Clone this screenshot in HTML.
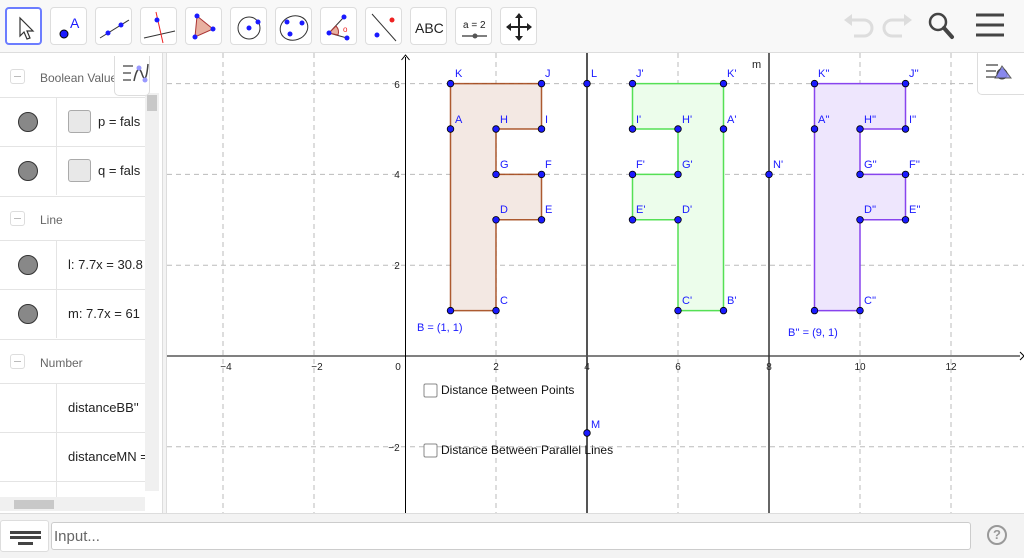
<!DOCTYPE html>
<html><head><meta charset="utf-8">
<style>
*{margin:0;padding:0;box-sizing:border-box}
body{width:1024px;height:558px;overflow:hidden;background:#fff;font-family:"Liberation Sans",sans-serif;position:relative}
.tb{position:absolute;left:0;top:0;width:1024px;height:53px;background:#f8f8f8;border-bottom:1px solid #ddd}
.btn{position:absolute;top:7px;width:37px;height:38px;background:#fff;border:1px solid #ddd;border-radius:4px}
.btn svg{position:absolute;left:0;top:0}
.lp{position:absolute;left:0;top:53px;width:163px;height:460px;background:#fff;border-right:1px solid #ddd}
.hdr{position:absolute;left:0;width:145px;height:44px;font-size:12px;color:#666}
.hdr .m{position:absolute;left:10px;top:14px;width:15px;height:15px;border:1px solid #ddd;border-radius:3px}
.hdr .m:after{content:"";position:absolute;left:3px;top:6px;width:7px;height:1px;background:#bbb}
.hdr span{position:absolute;left:40px;top:16px}
.row{position:absolute;left:0;width:145px;height:49px;border-top:1px solid #e4e4e4;font-size:13px;color:#222}
.row .c{position:absolute;left:18px;top:14px;width:20px;height:20px;border-radius:50%;background:#888;border:1px solid #333}
.row .d{position:absolute;left:56px;top:0;width:1px;height:48px;background:#e4e4e4}
.row .t{position:absolute;left:68px;top:16px;white-space:nowrap}
.row .bx{position:absolute;left:68px;top:12px;width:23px;height:23px;border:1px solid #aaa;border-radius:3px;background:#e8e8e8}
.bb{position:absolute;left:0;top:513px;width:1024px;height:45px;background:#f3f3f3;border-top:1px solid #ddd}
</style></head><body>
<div class="tb">
 <div class="btn" style="left:5px;border:2px solid #6c7dff"><svg width="37" height="38"><path d="M13 9 L13 27 L17 23 L20 30 L23 29 L20 22 L26 22 Z" fill="#fff" stroke="#333" stroke-width="1.2"/></svg></div>
 <div class="btn" style="left:50px"><svg width="37" height="38"><circle cx="13" cy="26" r="4" fill="#1a1aff" stroke="#000"/><text x="19" y="20" font-size="14" fill="#1a1aff" font-family="Liberation Sans">A</text></svg></div>
 <div class="btn" style="left:95px"><svg width="37" height="38"><line x1="4" y1="30" x2="33" y2="12" stroke="#333"/><circle cx="12" cy="25" r="2.5" fill="#1a1aff"/><circle cx="25" cy="17" r="2.5" fill="#1a1aff"/></svg></div>
 <div class="btn" style="left:140px"><svg width="37" height="38"><line x1="3" y1="30" x2="34" y2="23" stroke="#333"/><line x1="15" y1="4" x2="22" y2="35" stroke="#e22"/><circle cx="16" cy="12" r="2.5" fill="#1a1aff"/></svg></div>
 <div class="btn" style="left:185px"><svg width="37" height="38"><polygon points="11,8 27,21 9,29" fill="#e8b0a0" stroke="#a33"/><circle cx="11" cy="8" r="2.5" fill="#1a1aff"/><circle cx="27" cy="21" r="2.5" fill="#1a1aff"/><circle cx="9" cy="29" r="2.5" fill="#1a1aff"/></svg></div>
 <div class="btn" style="left:230px"><svg width="37" height="38"><circle cx="18" cy="20" r="11" fill="none" stroke="#333"/><circle cx="18" cy="20" r="2.5" fill="#1a1aff"/><circle cx="27" cy="14" r="2.5" fill="#1a1aff"/></svg></div>
 <div class="btn" style="left:275px"><svg width="37" height="38"><ellipse cx="18" cy="20" rx="14" ry="12" fill="none" stroke="#333" transform="rotate(-20 18 20)"/><circle cx="11" cy="14" r="2.5" fill="#1a1aff"/><circle cx="26" cy="15" r="2.5" fill="#1a1aff"/><circle cx="14" cy="26" r="2.5" fill="#1a1aff"/></svg></div>
 <div class="btn" style="left:320px"><svg width="37" height="38"><path d="M8 25 L23 9 M8 25 L26 30" stroke="#333" fill="none"/><path d="M8 25 L15 18 A9 9 0 0 1 17 27 Z" fill="#e8b0a0" stroke="#a33"/><text x="22" y="24" font-size="8" fill="#e22">o</text><circle cx="8" cy="25" r="2.5" fill="#1a1aff"/><circle cx="23" cy="9" r="2.5" fill="#1a1aff"/><circle cx="26" cy="30" r="2.5" fill="#1a1aff"/></svg></div>
 <div class="btn" style="left:365px"><svg width="37" height="38"><line x1="6" y1="6" x2="30" y2="33" stroke="#333"/><circle cx="26" cy="12" r="2.5" fill="#e22"/><circle cx="11" cy="27" r="2.5" fill="#1a1aff"/></svg></div>
 <div class="btn" style="left:410px"><svg width="37" height="38"><text x="4" y="25" font-size="14" fill="#222" font-family="Liberation Sans">ABC</text></svg></div>
 <div class="btn" style="left:455px"><svg width="37" height="38"><text x="7" y="20" font-size="10" fill="#222" font-family="Liberation Sans">a = 2</text><line x1="6" y1="28" x2="31" y2="28" stroke="#555" stroke-width="1.5"/><circle cx="19" cy="28" r="2.5" fill="#555"/></svg></div>
 <div class="btn" style="left:500px"><svg width="37" height="38"><path d="M18 6 V32 M6 19 H30" stroke="#222" stroke-width="2"/><path d="M18 5 l-4 5 h8z M18 33 l-4 -5 h8z M5 19 l5 -4 v8z M31 19 l-5 -4 v8z" fill="#222"/></svg></div>
 <svg style="position:absolute;left:840px;top:10px" width="180" height="36">
  <path d="M10 10 H24 A8 8 0 0 1 24 26 H14" fill="none" stroke="#ddd" stroke-width="3"/><path d="M4 10 l8 -6 v12z" fill="#ddd"/>
  <path d="M66 10 H52 A8 8 0 0 0 52 26 H62" fill="none" stroke="#ddd" stroke-width="3"/><path d="M72 10 l-8 -6 v12z" fill="#ddd"/>
  <circle cx="98" cy="12" r="8" fill="none" stroke="#444" stroke-width="2.5"/><line x1="104" y1="18" x2="112" y2="27" stroke="#444" stroke-width="4" stroke-linecap="round"/>
  <path d="M136 5 H164 M136 15 H164 M136 25 H164" stroke="#444" stroke-width="3"/>
 </svg>
</div>

<svg style="position:absolute;left:0;top:0" width="1024" height="558">
 <g stroke="#bbb" stroke-dasharray="5,4" stroke-width="1">
  <line x1="223" y1="53" x2="223" y2="513"/><line x1="314" y1="53" x2="314" y2="513"/><line x1="496" y1="53" x2="496" y2="513"/><line x1="678" y1="53" x2="678" y2="513"/><line x1="860" y1="53" x2="860" y2="513"/><line x1="951" y1="53" x2="951" y2="513"/>
  <line x1="167" y1="83.6" x2="1024" y2="83.6"/><line x1="167" y1="174.4" x2="1024" y2="174.4"/><line x1="167" y1="265.2" x2="1024" y2="265.2"/><line x1="167" y1="446.8" x2="1024" y2="446.8"/>
 </g>
 <line x1="167" y1="356" x2="1020" y2="356" stroke="#000"/><path d="M1020 352 L1024 356 L1020 360" fill="none" stroke="#000"/>
 <line x1="405.5" y1="57" x2="405.5" y2="513" stroke="#000"/><path d="M401.5 60 L405.5 55 L409.5 60" fill="none" stroke="#000"/>
 <line x1="587" y1="53" x2="587" y2="513" stroke="#555" stroke-width="2"/>
 <line x1="769" y1="53" x2="769" y2="513" stroke="#333" stroke-width="1.5"/>
 <g font-size="10" fill="#222" font-family="Liberation Sans" text-anchor="middle">
  <text x="226" y="370">−4</text><text x="317" y="370">−2</text><text x="398" y="370">0</text><text x="496" y="370">2</text><text x="587" y="370">4</text><text x="678" y="370">6</text><text x="769" y="370">8</text><text x="860" y="370">10</text><text x="951" y="370">12</text>
  <text x="397" y="88">6</text><text x="397" y="178">4</text><text x="397" y="269">2</text><text x="394" y="451">−2</text>
 </g>
 <polygon points="450.5,310.6 450.5,83.6 541.5,83.6 541.5,129 496,129 496,174.4 541.5,174.4 541.5,219.8 496,219.8 496,310.6" fill="#f3e8e3" stroke="#993300" stroke-width="1.5" stroke-opacity="0.8"/>
 <polygon points="723.5,310.6 723.5,83.6 632.5,83.6 632.5,129 678,129 678,174.4 632.5,174.4 632.5,219.8 678,219.8 678,310.6" fill="#ecfdeb" stroke="#55e055" stroke-width="1.5"/>
 <polygon points="814.5,310.6 814.5,83.6 905.5,83.6 905.5,129 860,129 860,174.4 905.5,174.4 905.5,219.8 860,219.8 860,310.6" fill="#eee6fd" stroke="#8844ee" stroke-width="1.5"/>
 <g fill="#1a1aff" stroke="#000" stroke-width="0.8">
  <circle cx="450.5" cy="310.6" r="3.3"/><circle cx="450.5" cy="83.6" r="3.3"/><circle cx="541.5" cy="83.6" r="3.3"/><circle cx="450.5" cy="129" r="3.3"/><circle cx="541.5" cy="129" r="3.3"/><circle cx="496" cy="129" r="3.3"/><circle cx="496" cy="174.4" r="3.3"/><circle cx="541.5" cy="174.4" r="3.3"/><circle cx="541.5" cy="219.8" r="3.3"/><circle cx="496" cy="219.8" r="3.3"/><circle cx="496" cy="310.6" r="3.3"/>
  <circle cx="723.5" cy="310.6" r="3.3"/><circle cx="723.5" cy="83.6" r="3.3"/><circle cx="632.5" cy="83.6" r="3.3"/><circle cx="723.5" cy="129" r="3.3"/><circle cx="632.5" cy="129" r="3.3"/><circle cx="678" cy="129" r="3.3"/><circle cx="678" cy="174.4" r="3.3"/><circle cx="632.5" cy="174.4" r="3.3"/><circle cx="632.5" cy="219.8" r="3.3"/><circle cx="678" cy="219.8" r="3.3"/><circle cx="678" cy="310.6" r="3.3"/>
  <circle cx="814.5" cy="310.6" r="3.3"/><circle cx="814.5" cy="83.6" r="3.3"/><circle cx="905.5" cy="83.6" r="3.3"/><circle cx="814.5" cy="129" r="3.3"/><circle cx="905.5" cy="129" r="3.3"/><circle cx="860" cy="129" r="3.3"/><circle cx="860" cy="174.4" r="3.3"/><circle cx="905.5" cy="174.4" r="3.3"/><circle cx="905.5" cy="219.8" r="3.3"/><circle cx="860" cy="219.8" r="3.3"/><circle cx="860" cy="310.6" r="3.3"/>
  <circle cx="587" cy="83.6" r="3.3"/><circle cx="769" cy="174.4" r="3.3"/><circle cx="587" cy="433" r="3.3"/>
 </g>
 <g font-size="11" fill="#1a1aff" font-family="Liberation Sans">
  <text x="455" y="77">K</text><text x="545" y="77">J</text><text x="455" y="123">A</text><text x="500" y="123">H</text><text x="545" y="123">I</text><text x="500" y="168">G</text><text x="545" y="168">F</text><text x="500" y="213">D</text><text x="545" y="213">E</text><text x="500" y="304">C</text><text x="417" y="331">B = (1, 1)</text>
  <text x="636" y="77">J'</text><text x="727" y="77">K'</text><text x="636" y="123">I'</text><text x="682" y="123">H'</text><text x="727" y="123">A'</text><text x="636" y="168">F'</text><text x="682" y="168">G'</text><text x="636" y="213">E'</text><text x="682" y="213">D'</text><text x="682" y="304">C'</text><text x="727" y="304">B'</text>
  <text x="818" y="77">K''</text><text x="909" y="77">J''</text><text x="818" y="123">A''</text><text x="864" y="123">H''</text><text x="909" y="123">I''</text><text x="864" y="168">G''</text><text x="909" y="168">F''</text><text x="864" y="213">D''</text><text x="909" y="213">E''</text><text x="864" y="304">C''</text><text x="788" y="336">B'' = (9, 1)</text>
  <text x="591" y="77">L</text><text x="773" y="168">N'</text><text x="591" y="428">M</text>
 </g>
 <text x="752" y="68" font-size="11" fill="#222" font-family="Liberation Sans">m</text>
 <g font-size="12" fill="#111" font-family="Liberation Sans">
  <rect x="424" y="384" width="13" height="13" rx="1.5" fill="#fff" stroke="#888"/><text x="441" y="394">Distance Between Points</text>
  <rect x="424" y="444" width="13" height="13" rx="1.5" fill="#fff" stroke="#888"/><text x="441" y="454">Distance Between Parallel Lines</text>
 </g>
</svg>

<div style="position:absolute;left:977px;top:53px;width:47px;height:42px;background:#fff;border:1px solid #ddd;border-top:none;border-right:none;border-radius:0 0 0 5px">
 <svg width="47" height="42"><path d="M8 12 H20 M8 18 H18 M8 24 H18" stroke="#888" stroke-width="2"/><circle cx="24" cy="21" r="5" fill="#8888ee" stroke="#444"/><polygon points="24,13 33,25 17,25" fill="#8888ee" stroke="#444" opacity="0.85"/></svg>
</div>

<div class="lp">
 <div class="hdr" style="top:2px"><div class="m"></div><span>Boolean Value</span></div>
 <div class="row" style="top:44px"><div class="c"></div><div class="d"></div><div class="bx"></div><div class="t" style="left:98px">p = fals</div></div>
 <div class="row" style="top:93px"><div class="c"></div><div class="d"></div><div class="bx"></div><div class="t" style="left:98px">q = fals</div></div>
 <div class="hdr" style="top:143px;border-top:1px solid #e4e4e4"><div class="m"></div><span>Line</span></div>
 <div class="row" style="top:187px"><div class="c"></div><div class="d"></div><div class="t">l: 7.7x = 30.8</div></div>
 <div class="row" style="top:236px"><div class="c"></div><div class="d"></div><div class="t">m: 7.7x = 61</div></div>
 <div class="hdr" style="top:286px;border-top:1px solid #e4e4e4"><div class="m"></div><span>Number</span></div>
 <div class="row" style="top:330px"><div class="d"></div><div class="t">distanceBB''</div></div>
 <div class="row" style="top:379px"><div class="d"></div><div class="t">distanceMN =</div></div>
 <div class="row" style="top:428px;height:20px"><div class="d" style="height:20px"></div></div>
 <div style="position:absolute;left:145px;top:40px;width:14px;height:398px;background:#f0f0f0"></div>
 <div style="position:absolute;left:147px;top:42px;width:10px;height:16px;background:#c8c8c8"></div>
 <div style="position:absolute;left:0;top:444px;width:145px;height:14px;background:#f0f0f0"></div>
 <div style="position:absolute;left:14px;top:447px;width:40px;height:9px;background:#c8c8c8"></div>
 <div style="position:absolute;left:114px;top:3px;width:36px;height:40px;background:#fff;border:1px solid #ddd;border-top:none;border-radius:0 0 5px 5px">
  <svg width="36" height="40"><path d="M8 10 H18 M8 17 H16 M8 24 H16" stroke="#888" stroke-width="2"/><path d="M19 25 Q23 6 27 18 T33 8" fill="none" stroke="#444" stroke-width="1.5"/><circle cx="24" cy="12" r="2.5" fill="#99f"/><circle cx="30" cy="24" r="2.5" fill="#99f"/></svg>
 </div>
</div>
<div style="position:absolute;left:163px;top:53px;width:4px;height:460px;background:#f3f3f3;border-right:1px solid #ddd"></div>

<div class="bb">
 <div style="position:absolute;left:0;top:6px;width:49px;height:32px;background:#fff;border:1px solid #ddd;border-radius:3px">
  <svg width="49" height="32"><g fill="#444"><rect x="9" y="10" width="31" height="3"/><rect x="9" y="15" width="31" height="3"/><rect x="17" y="21" width="15" height="3"/></g></svg>
 </div>
 <div style="position:absolute;left:51px;top:8px;width:920px;height:28px;background:#fff;border:1px solid #ccc;border-radius:3px;font-size:15px;color:#666;padding:5px 0 0 2px">Input...</div>
 <div style="position:absolute;left:987px;top:11px;width:20px;height:20px;border:2px solid #999;border-radius:50%;color:#999;font-size:13px;font-weight:bold;text-align:center;line-height:16px">?</div>
</div>
</body></html>
